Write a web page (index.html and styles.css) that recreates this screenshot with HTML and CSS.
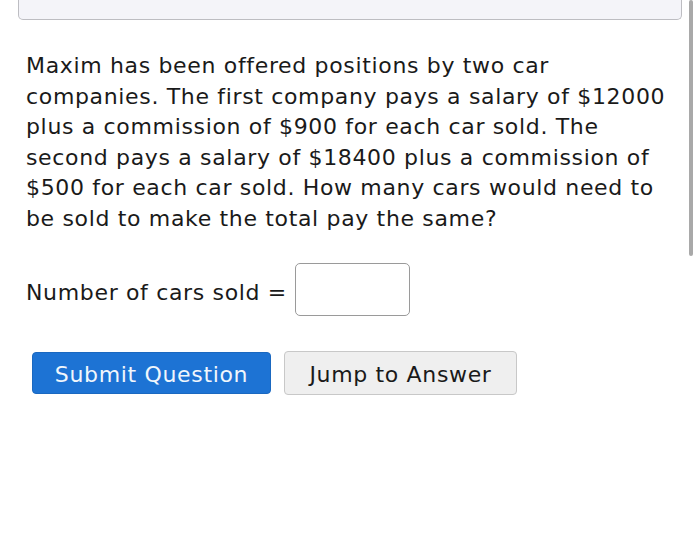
FILE: index.html
```html
<!DOCTYPE html>
<html>
<head>
<meta charset="utf-8">
<link rel="stylesheet" href="styles.css">
</head>
<body>
<div class="page">
  <div class="topbox"></div>
  <div class="content">
    <p class="question">Maxim has been offered positions by two car companies. The first company pays a salary of $12000 plus a commission of $900 for each car sold. The second pays a salary of $18400 plus a commission of $500 for each car sold. How many cars would need to be sold to make the total pay the same?</p>
    <div class="answer-row">
      <span class="label">Number of cars sold =</span>
      <span class="input"></span>
    </div>
    <div class="buttons">
      <button class="btn primary">Submit Question</button>
      <button class="btn secondary">Jump to Answer</button>
    </div>
  </div>
  <div class="scrollbar"></div>
</div>
</body>
</html>
```
FILE: styles.css
```css
html, body {
  margin: 0;
  padding: 0;
  background: #fff;
}
.page {
  position: relative;
  width: 700px;
  height: 552px;
  overflow: hidden;
  font-family: "DejaVu Sans", Verdana, sans-serif;
  color: #1a1a1a;
}
.topbox {
  margin-left: 18px;
  width: 662px;
  height: 19px;
  background: #f4f4f9;
  border: 1px solid #bdbdc2;
  border-top: none;
  border-radius: 0 0 5px 5px;
}
.content {
  padding: 0 0 0 26px;
  width: 650px;
}
.question {
  margin: 31px 0 0 0;
  font-size: 22px;
  line-height: 30.5px;
  letter-spacing: 0.66px;
}
.answer-row {
  display: flex;
  align-items: center;
  margin-top: 29px;
  height: 53px;
}
.label {
  font-size: 22px;
  letter-spacing: 0.66px;
  padding-top: 5px;
}
.input {
  display: block;
  margin-left: 8px;
  width: 113px;
  height: 51px;
  border: 1px solid #9a9a9a;
  border-radius: 5px;
  background: #fff;
}
.buttons {
  display: flex;
  align-items: center;
  gap: 13px;
  margin-top: 35px;
  margin-left: 6px;
}
.btn {
  font-family: "DejaVu Sans", Verdana, sans-serif;
  font-size: 22px;
  letter-spacing: 0.66px;
  border-radius: 4px;
  padding: 3px 0 0 0;
  box-sizing: border-box;
}
.primary {
  width: 239px;
  height: 42px;
  background: #1d73d4;
  border: 1px solid #1a68c0;
  color: #f0f6fc;
}
.secondary {
  width: 233px;
  height: 44px;
  background: #efefef;
  border: 1px solid #c8c8c8;
  color: #1a1a1a;
}
.scrollbar {
  position: absolute;
  left: 689px;
  top: 0;
  width: 4px;
  height: 256px;
  background: #a9a9a9;
  border-radius: 2px;
}
```
